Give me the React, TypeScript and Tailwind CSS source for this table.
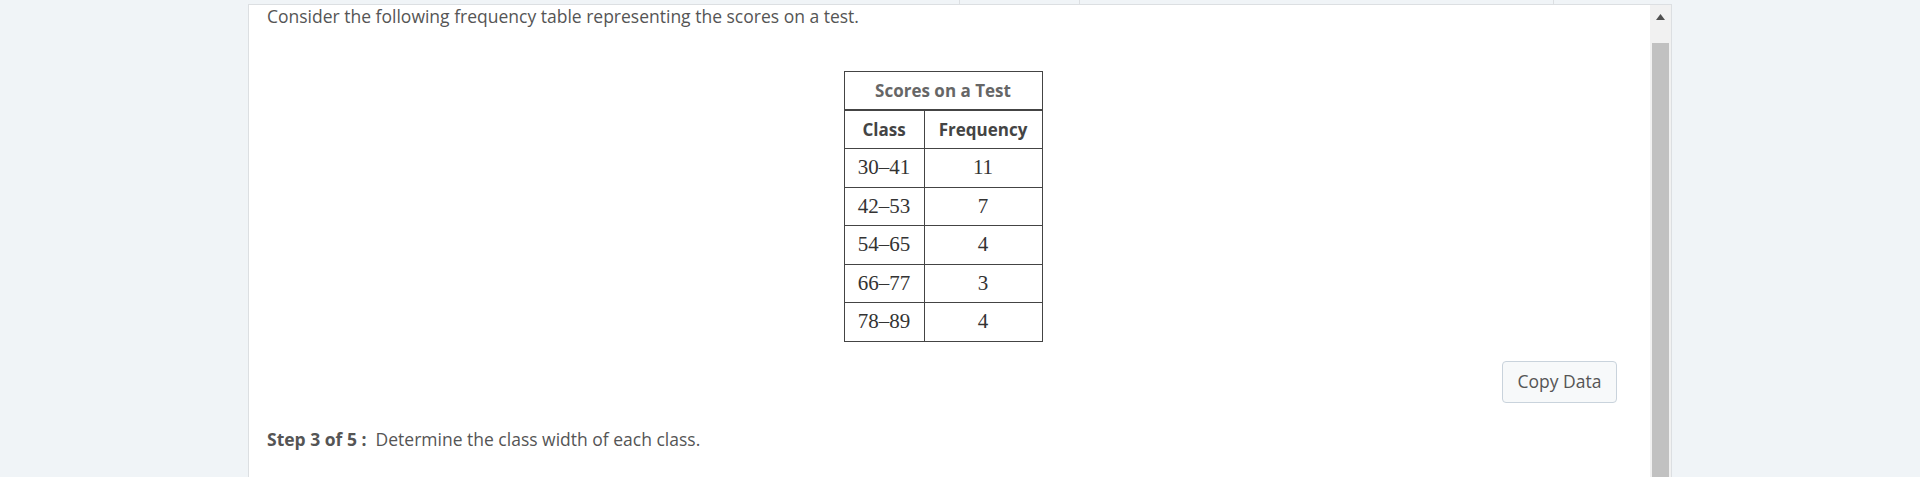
import React from "react";

const rows: [string, string][] = [
  ["30–41", "11"],
  ["42–53", "7"],
  ["54–65", "4"],
  ["66–77", "3"],
  ["78–89", "4"],
];

export default function App() {
  return (
    <div className="w-[1920px] h-[477px] overflow-hidden bg-[#f0f4f7] font-['Open_Sans',sans-serif]">
      <div className="ml-[248px] w-[1424px] h-full flex flex-col">
        {/* top strip (remnant of content above) */}
        <div className="h-[5px] flex border-b border-[#dcdfe2] bg-[#f0f4f7]">
          <div className="w-[712px] border-r border-[#dcdfe2]" />
          <div className="w-[120px] border-r border-[#dcdfe2]" />
          <div className="w-[474px] border-r border-[#dcdfe2]" />
          <div className="flex-1" />
        </div>
        <div className="flex-1 flex bg-white border-l border-r border-[#dcdfe2] min-h-0">
          <div className="flex-1 pl-[18px] pr-[33px] flex flex-col">
            <p className="text-[17.5px] leading-[22px] text-[#555]">
              Consider the following frequency table representing the scores on a test.
            </p>
            <div className="mt-[44px] flex justify-center pl-[2px]">
              <table className="border-collapse border border-[#444] w-[199px]">
                <thead>
                  <tr>
                    <th
                      colSpan={2}
                      className="h-[38.5px] border-b-2 border-[#444] text-[17px] font-bold text-[#666] text-center"
                    >
                      Scores on a Test
                    </th>
                  </tr>
                  <tr>
                    <th className="w-[80px] h-[38.5px] border border-[#444] text-[17px] font-bold text-[#444] text-center">
                      Class
                    </th>
                    <th className="h-[38.5px] border border-[#444] text-[17px] font-bold text-[#444] text-center">
                      Frequency
                    </th>
                  </tr>
                </thead>
                <tbody>
                  {rows.map(([c, f]) => (
                    <tr key={c}>
                      <td className="h-[38.5px] border border-[#444] text-center font-['Liberation_Serif',serif] text-[21px] text-[#333]">
                        {c}
                      </td>
                      <td className="h-[38.5px] border border-[#444] text-center font-['Liberation_Serif',serif] text-[21px] text-[#333]">
                        {f}
                      </td>
                    </tr>
                  ))}
                </tbody>
              </table>
            </div>
            <div className="mt-[19px] flex justify-end">
              <button className="w-[115px] h-[42px] rounded-[4px] border border-[#c9d3dc] bg-[#f7f9fa] text-[17.5px] text-[#555]">
                Copy Data
              </button>
            </div>
            <p className="mt-[24px] text-[17.5px] leading-[24px] text-[#555]">
              <span className="font-bold">Step 3 of 5 :</span>&nbsp; Determine the class width of each class.
            </p>
          </div>
          {/* scrollbar */}
          <div className="w-[21px] bg-[#f1f1f1] flex flex-col items-center">
            <div className="h-[38px] w-full flex justify-center pt-[9px]">
              <svg width="9" height="6" viewBox="0 0 9 6">
                <polygon points="4.5,0 9,6 0,6" fill="#505050" />
              </svg>
            </div>
            <div className="w-[17px] flex-1 bg-[#c1c1c1]" />
          </div>
        </div>
      </div>
    </div>
  );
}
